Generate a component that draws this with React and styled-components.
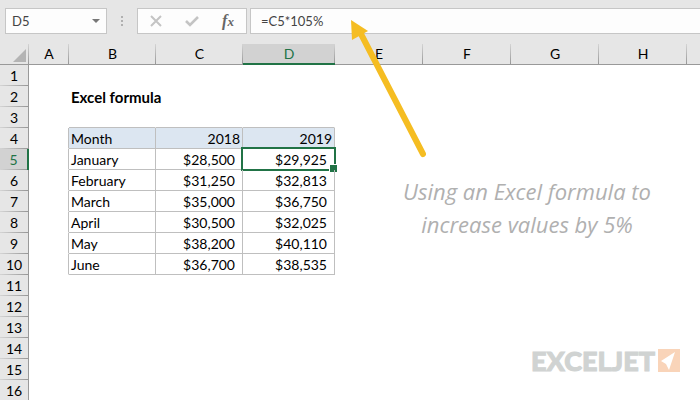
import React from "react";
import styled, { createGlobalStyle } from "styled-components";

const columns = ["A", "B", "C", "D", "E", "F", "G", "H", "I"];
const widths = [29, 40, 87, 87, 92, 88, 88, 88, 88];

const rows = [
	{},
	{ B: "Excel formula" },
	{},
	{ B: "Month", C: "2018", D: "2019" },
	{ B: "January", C: "$28,500", D: "$29,925" },
	{ B: "February", C: "$31,250", D: "$32,813" },
	{ B: "March", C: "$35,000", D: "$36,750" },
	{ B: "April", C: "$30,500", D: "$32,025" },
	{ B: "May", C: "$38,200", D: "$40,110" },
	{ B: "June", C: "$36,700", D: "$38,535" },
	{},
	{},
	{},
	{},
	{},
	{}
];

const GlobalStyle = createGlobalStyle`
	* {
		box-sizing: border-box;
	}

	body {
		margin: 0;
		background: #fff;
		color: #000;
		font-family: Lato, "Open Sans", sans-serif;
		font-size: 14px;
	}
`;

const Page = styled.main`
	position: relative;
	height: 100vh;
	overflow: hidden;
`;

const Toolbar = styled.div`
	display: flex;
	padding: 8px 0 10px 5px;
	background: #e6e6e6;
`;

const Box = styled.div`
	display: flex;
	align-items: center;
	height: 26px;
	border: 1px solid #c6c6c6;
	background: #fdfdfd;
`;

const NameBox = styled(Box)`
	width: 102px;
`;

const Actions = styled(Box)`
	width: 110px;
	margin-right: 3px;
`;

const FormulaBox = styled(Box)`
	flex: 1;
	border-right: 0;
`;

const TextInput = styled.input`
	flex: 1;
	min-width: 0;
	height: 24px;
	padding: 0 ${p => p.$pad}px;
	border: 0;
	outline: 0;
	background: transparent;
	color: #444;
	font: inherit;
	font-size: 13px;
`;

const IconButton = styled.button`
	display: flex;
	flex: ${p => (p.$small ? "0 0 20px" : "1")};
	align-items: center;
	justify-content: center;
	height: 24px;
	padding: 0;
	border: 0;
	background: transparent;
	color: ${p => (p.$dark ? "#666" : "#c4c4c4")};
`;

const Fx = styled.span`
	font: italic bold 16px/20px "Liberation Serif", serif;

	sub {
		font-size: 13px;
		line-height: 1;
		vertical-align: baseline;
	}
`;

const Dots = styled.div`
	display: flex;
	flex-direction: column;
	align-items: center;
	justify-content: center;
	gap: 2px;
	width: 30px;

	i {
		width: 2px;
		height: 2px;
		background: #b0b0b0;
	}
`;

const Sheet = styled.table`
	width: 100%;
	table-layout: fixed;
	border-collapse: separate;
	border-spacing: 0;
	line-height: 20px;
	white-space: nowrap;
`;

const HeadCell = styled.th`
	height: 21px;
	padding: 0;
	border-bottom: ${p => (p.$active ? "2px solid #217346" : "1px solid #999")};
	background: linear-gradient(#d4d4d4, #979797) right / 1px 100% no-repeat
		${p => (p.$active ? "#d2d2d2" : "#e6e6e6")};
	color: ${p => (p.$active ? "#217346" : "#000")};
	font-weight: 400;
	line-height: ${p => (p.$active ? 19 : 20)}px;

	&:last-child {
		background: #e6e6e6;
	}

	svg {
		display: block;
		margin: 2px 3px 0 auto;
	}
`;

const RowHead = styled.th`
	height: 21px;
	padding: 0;
	border-right: ${p => (p.$active ? "2px solid #217346" : "1px solid #999")};
	background: linear-gradient(to right, #d4d4d4, #979797) bottom / 100% 1px
		no-repeat ${p => (p.$active ? "#d2d2d2" : "#e6e6e6")};
	color: ${p => (p.$active ? "#217346" : "#000")};
	font-weight: 400;
`;

const Cell = styled.td`
	position: relative;
	height: 21px;
	padding: 2px ${p => (p.$money ? 7 : 2)}px 0 2px;
	border: solid transparent;
	border-width: 0 1px 1px 0;
	border-right-color: ${p => (p.$right ? "#bfbfbf" : "transparent")};
	border-bottom-color: ${p => (p.$bottom ? "#bfbfbf" : "transparent")};
	background: ${p => (p.$fill ? "#dce6f1" : "transparent")};
	background-clip: padding-box;
	font-size: ${p => (p.$bold ? 15 : 14)}px;
	font-weight: ${p => (p.$bold ? 700 : 400)};
	line-height: 18px;
	text-align: ${p => (p.$number ? "right" : "left")};
`;

const Selection = styled.div`
	position: absolute;
	inset: -2px;
	border: 2px solid #217346;
	pointer-events: none;

	&::after {
		content: "";
		position: absolute;
		right: -4px;
		bottom: -4px;
		width: 7px;
		height: 7px;
		border: 1px solid #fff;
		background: #217346;
	}
`;

const Arrow = styled.svg`
	position: absolute;
	top: 18px;
	left: 348px;
	pointer-events: none;
`;

const Note = styled.p`
	position: absolute;
	top: 175px;
	left: 387px;
	width: 280px;
	margin: 0;
	color: #b0b0b0;
	font: italic 400 22px/33px "Open Sans", sans-serif;
	text-align: center;
`;

const Logo = styled.div`
	position: absolute;
	right: 20px;
	bottom: 28px;
	display: flex;
	align-items: center;
	gap: 3px;
	color: #d0d3d2;
	font-size: 27px;
	font-weight: 900;
	line-height: 23px;
	-webkit-text-stroke: 1px #d0d3d2;
`;

const Cross = () => (
	<svg width="12" height="12" viewBox="0 0 12 12" aria-hidden="true">
		<path d="M1 1l10 10M11 1L1 11" stroke="currentColor" strokeWidth="2" />
	</svg>
);

const Check = () => (
	<svg width="14" height="12" viewBox="0 0 14 12" aria-hidden="true">
		<path
			d="M1 6l4 4 8-8"
			fill="none"
			stroke="currentColor"
			strokeWidth="2.6"
		/>
	</svg>
);

const FormulaBar = () => (
	<Toolbar>
		<NameBox>
			<TextInput $pad={6} aria-label="Name box" defaultValue="D5" />
			<IconButton $small $dark aria-label="Show names">
				<svg width="8" height="4" viewBox="0 0 8 4" aria-hidden="true">
					<path d="M0 0h8L4 4z" fill="#777" />
				</svg>
			</IconButton>
		</NameBox>
		<Dots>
			<i />
			<i />
			<i />
		</Dots>
		<Actions>
			<IconButton aria-label="Cancel">
				<Cross />
			</IconButton>
			<IconButton aria-label="Enter">
				<Check />
			</IconButton>
			<IconButton $dark aria-label="Insert function">
				<Fx>
					f<sub>x</sub>
				</Fx>
			</IconButton>
		</Actions>
		<FormulaBox>
			<TextInput $pad={10} aria-label="Formula" defaultValue="=C5*105%" />
		</FormulaBox>
	</Toolbar>
);

const SheetRow = ({ number, data }) => {
	const inTable = number >= 4 && number <= 10;

	return (
		<tr>
			<RowHead scope="row" $active={number === 5}>
				{number}
			</RowHead>
			{columns.map(col => {
				const inRange = "BCD".includes(col);
				return (
					<Cell
						key={col}
						$right={inTable && "ABCD".includes(col)}
						$bottom={inRange && number >= 3 && number <= 10}
						$fill={inRange && number === 4}
						$bold={number === 2}
						$number={col === "C" || col === "D"}
						$money={number > 4 && (col === "C" || col === "D")}
					>
						{data[col]}
						{number === 5 && col === "D" && <Selection />}
					</Cell>
				);
			})}
		</tr>
	);
};

const App = () => (
	<Page>
		<GlobalStyle />
		<FormulaBar />
		<Sheet>
			<colgroup>
				{widths.map((width, i) => (
					<col key={i} style={{ width }} />
				))}
				<col />
			</colgroup>
			<thead>
				<tr>
					<HeadCell aria-label="Select all">
						<svg width="13" height="13" viewBox="0 0 13 13" aria-hidden="true">
							<path d="M13 0v13H0z" fill="#b4b4b4" />
						</svg>
					</HeadCell>
					{columns.map(col => (
						<HeadCell key={col} scope="col" $active={col === "D"}>
							{col === "I" ? "" : col}
						</HeadCell>
					))}
				</tr>
			</thead>
			<tbody>
				{rows.map((data, i) => (
					<SheetRow key={i} number={i + 1} data={data} />
				))}
			</tbody>
		</Sheet>
		<Arrow width="80" height="142" viewBox="0 0 80 142" aria-hidden="true">
			<path
				d="M13 16l62 120"
				stroke="#f5bd22"
				strokeWidth="6"
				strokeLinecap="round"
			/>
			<path d="M3 2l17 11L4 22z" fill="#f5bd22" />
		</Arrow>
		<Note>
			Using an Excel formula to
			<br />
			increase values by 5%
		</Note>
		<Logo>
			EXCELJET
			<svg width="22" height="23" viewBox="0 0 22 23" aria-hidden="true">
				<path d="M0 0h22v23H0z" fill="#f9d4b9" />
				<path d="M17 3L3 12l5 3 3 6z" fill="#fff" />
			</svg>
		</Logo>
	</Page>
);

export default App;
